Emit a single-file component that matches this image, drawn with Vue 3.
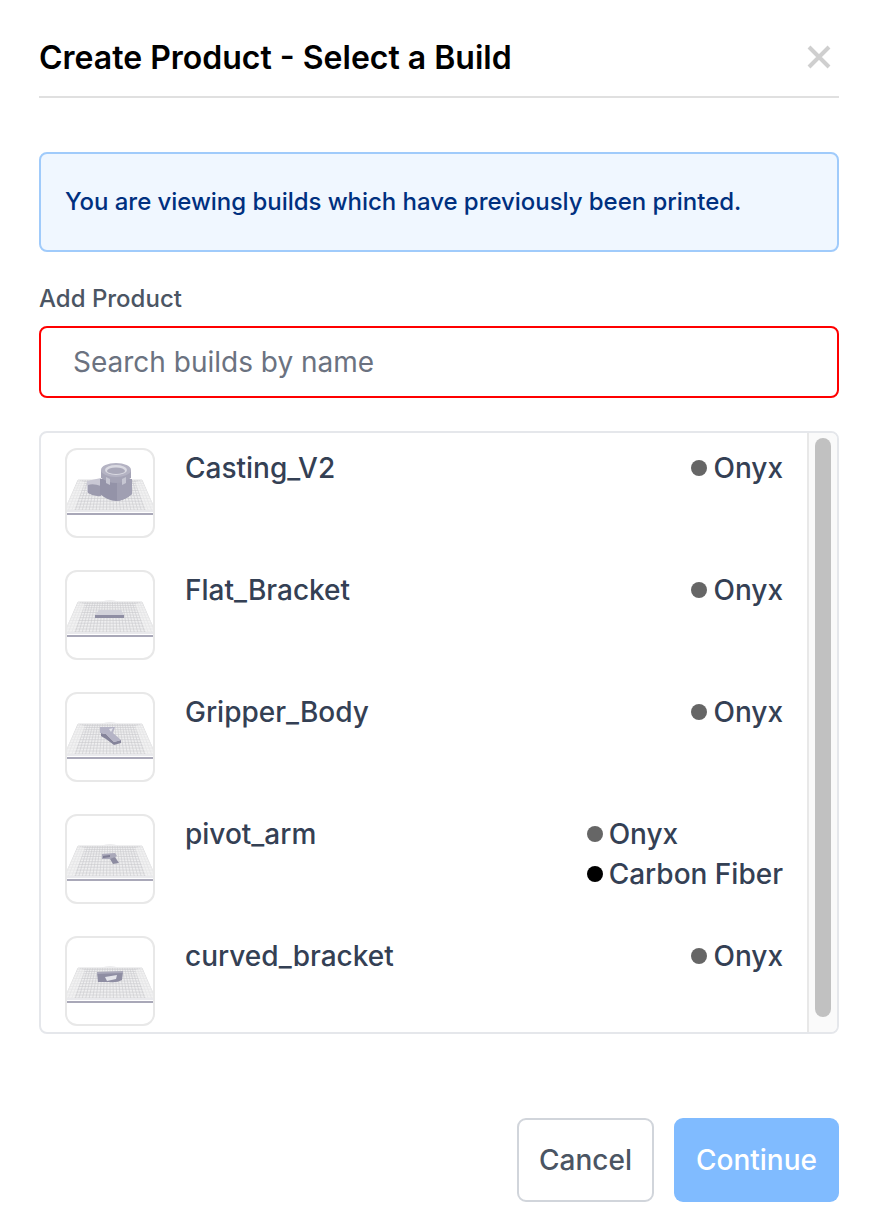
<script setup>
// perspective grid of the build plate, same for every thumbnail
const gridLines = []
for (let i = 0; i <= 26; i++) {
  gridLines.push(`M${13 + i * (64 / 26)} 32 L${i * (90 / 26)} 62`)
}
for (let i = 0; i <= 12; i++) {
  const t = Math.pow(i / 12, 1.2)
  const y = 32 + 30 * t
  const inset = 13 * (1 - t)
  gridLines.push(`M${inset} ${y} L${90 - inset} ${y}`)
}
const gridPath = gridLines.join(' ')

// each build draws its own part on top of the shared plate
const builds = [
  {
    name: 'Casting_V2',
    materials: [{ name: 'Onyx', color: 'gray' }],
    part: [
      { d: 'M22 33 L36 30 V48 L29 47 L22 44 Z', fill: '#c9c8d4' },
      { d: 'M23 37 Q28 35 36 38 V48 Q29 49 23 45 Z', fill: '#9c9bae' },
      { d: 'M35 31 V46 Q51 60 67 46 V31 Z', fill: '#9493a8' },
      { d: 'M52 31 H67 V46 Q60 52 52 53 Z', fill: '#a09fb2' },
      { d: 'M36 22 V30 Q51 40 66 30 V22 Z', fill: '#a5a4b6' },
      { d: 'M36 22 A15 7 0 1 1 66 22 A15 7 0 1 1 36 22 Z', fill: '#b4b3c3' },
      { d: 'M40 22 A11 5 0 1 1 62 22 A11 5 0 1 1 40 22 Z', fill: '#dadae2' },
      { d: 'M42 23 A9 3.5 0 0 1 60 23 A9 3 0 0 1 42 23 Z', fill: '#a9a8b9' },
      { d: 'M41 29 L45 31 V37 L41 35 Z', fill: '#c6c6d2' },
      { d: 'M57 31 L61 29 V35 L57 37 Z', fill: '#c6c6d2' }
    ]
  },
  {
    name: 'Flat_Bracket',
    materials: [{ name: 'Onyx', color: 'gray' }],
    part: [
      { d: 'M34 40 L56 40 L59 45 L30 45 Z', fill: '#d2d2da' },
      { d: 'M30 45 L59 45 L59 48 L30 48 Z', fill: '#8f8ea3' }
    ]
  },
  {
    name: 'Gripper_Body',
    materials: [{ name: 'Onyx', color: 'gray' }],
    part: [
      { d: 'M36 41 L41 42 L49 50 L56 48 L56 51 L49 53 L41 47 L36 44 Z', fill: '#85849a' },
      { d: 'M35 35 L50 35 L48 41 L56 48 L49 50 L41 42 L35 41 Z', fill: '#b5b4c6' },
      { d: 'M44 37 L48 36 L46 40 Z', fill: '#e6e6ec' }
    ]
  },
  {
    name: 'pivot_arm',
    materials: [
      { name: 'Onyx', color: 'gray' },
      { name: 'Carbon Fiber', color: 'black' }
    ],
    part: [
      { d: 'M37 40 L50 39 L52 42 L47 45 L37 45 Z', fill: '#aaa9ba' },
      { d: 'M45 45 L50 43 L54 49 L48 50 Z', fill: '#8d8ca1' },
      { d: 'M38 42 L45 41 L45 43 L38 44 Z', fill: '#7d7c93' }
    ]
  },
  {
    name: 'curved_bracket',
    materials: [{ name: 'Onyx', color: 'gray' }],
    part: [
      { d: 'M32 37 L58 36 L57 44 Q52 47 44 46 L33 46 Z', fill: '#8f8ea3' },
      { d: 'M40 41 L52 39 L51 43 L42 45 Z', fill: '#e4e4ea' },
      { d: 'M32 36 L58 35 L58 37 L32 38 Z', fill: '#a9a8b9' }
    ]
  }
]
</script>

<template>
  <div class="modal">
    <header class="head">
      <h1>Create Product - Select a Build</h1>
      <svg class="close" width="24" height="24" viewBox="0 0 24 24">
        <path d="M2 2 L22 22 M22 2 L2 22" stroke="#cfcfcf" stroke-width="4" fill="none" />
      </svg>
    </header>

    <div class="notice">You are viewing builds which have previously been printed.</div>

    <label class="label">Add Product</label>
    <input class="search" placeholder="Search builds by name" />

    <div class="list">
      <div class="rows">
        <div v-for="b in builds" :key="b.name" class="row">
          <div class="thumb">
            <svg width="86" height="86" viewBox="2 2 86 86">
              <path d="M13 32 H77 L88 56 V62 H2 V56 Z" fill="#efeff0" />
              <path :d="gridPath" stroke="#c9c9cd" stroke-width="0.6" fill="none" />
              <path d="M13 32 L2 56 V62 H9 L20 34 Z" fill="#f3f3f4" fill-opacity="0.6" />
              <path d="M77 32 L88 56 V62 H81 L70 34 Z" fill="#f3f3f4" fill-opacity="0.6" />
              <path d="M36 32 Q45 28 54 32 Z" fill="#ececee" />
              <path d="M2 62 H88 V64 H2 Z" fill="#e9e9ec" />
              <path d="M2 65 H88 V67 H2 Z" fill="#a9a8b8" />
              <path v-for="(p, i) in b.part" :key="i" :d="p.d" :fill="p.fill" />
            </svg>
          </div>
          <div class="name">{{ b.name }}</div>
          <div class="materials">
            <div v-for="m in b.materials" :key="m.name" class="material">
              <span class="dot" :class="m.color"></span>{{ m.name }}
            </div>
          </div>
        </div>
      </div>
      <div class="track"><div class="bar"></div></div>
    </div>

    <footer class="actions">
      <button class="btn cancel">Cancel</button>
      <button class="btn go">Continue</button>
    </footer>
  </div>
</template>

<style>
body {
  background: #fff;
}
</style>

<style scoped>
.modal {
  width: 878px;
  height: 1230px;
  box-sizing: border-box;
  padding: 0 39px 0 39px;
  display: flex;
  flex-direction: column;
  font-family: Inter, "Liberation Sans", sans-serif;
  overflow: hidden;
}
.head {
  height: 98px;
  box-sizing: border-box;
  flex: none;
  border-bottom: 2px solid #e0e0e0;
  display: flex;
  align-items: center;
  justify-content: space-between;
  padding: 18px 8px 0 0;
}
h1 {
  margin: 1px 0 0;
  font-size: 32px;
  line-height: 40px;
  font-weight: 600;
  color: #000;
}
.close {
  margin-top: -1px;
}
.notice {
  flex: none;
  margin-top: 54px;
  height: 100px;
  box-sizing: border-box;
  border: 2px solid #a0cbfb;
  border-radius: 8px;
  background: #f0f7ff;
  color: #00307f;
  font-size: 24px;
  font-weight: 500;
  display: flex;
  align-items: center;
  padding: 0 0 2px 24px;
  letter-spacing: -0.04px;
}
.label {
  flex: none;
  margin-top: 32px;
  height: 30px;
  line-height: 30px;
  font-size: 24px;
  font-weight: 500;
  color: #4b5563;
}
.search {
  flex: none;
  margin-top: 12px;
  height: 72px;
  box-sizing: border-box;
  border: 2px solid #f00;
  border-radius: 8px;
  padding: 0 32px;
  font: 400 28px Inter, "Liberation Sans", sans-serif;
  outline: none;
}
.search::placeholder {
  color: #6b7280;
  opacity: 1;
}
.list {
  flex: none;
  margin-top: 33px;
  height: 603px;
  box-sizing: border-box;
  border: 2px solid #e5e7eb;
  border-radius: 8px;
  display: flex;
  overflow: hidden;
}
.rows {
  flex: 1;
  padding: 15px 24px 0 24px;
  display: flex;
  flex-direction: column;
  gap: 32px;
}
.row {
  display: flex;
  height: 90px;
}
.thumb {
  width: 90px;
  height: 90px;
  box-sizing: border-box;
  border: 2px solid #e8e8e8;
  border-radius: 12px;
  overflow: hidden;
  flex: none;
}
.thumb svg {
  display: block;
  filter: blur(0.3px);
}
.name {
  margin-left: 30px;
  flex: 1;
  font-size: 28px;
  line-height: 40px;
  font-weight: 500;
  color: #344054;
}
.materials {
  font-size: 28px;
  line-height: 40px;
  font-weight: 500;
  color: #344054;
}
.material {
  display: flex;
  align-items: center;
}
.dot {
  width: 16px;
  height: 16px;
  border-radius: 50%;
  margin-right: 6px;
}
.dot.gray {
  background: #666;
}
.dot.black {
  background: #000;
}
.track {
  width: 30px;
  flex: none;
  box-sizing: border-box;
  border-left: 2px solid #e8e8e8;
  background: #fafafa;
  padding: 5px 6px 0 6px;
}
.bar {
  height: 579px;
  border-radius: 8px;
  background: #c1c1c1;
}
.actions {
  margin-top: 84px;
  display: flex;
  justify-content: flex-end;
  gap: 20px;
}
.btn {
  height: 84px;
  border-radius: 9px;
  font: 500 28px Inter, "Liberation Sans", sans-serif;
  box-sizing: border-box;
}
.cancel {
  width: 137px;
  background: #fff;
  border: 2px solid #d1d5db;
  color: #4b5563;
}
.go {
  width: 165px;
  background: #80bbff;
  border: 0;
  color: #fff;
}
</style>
